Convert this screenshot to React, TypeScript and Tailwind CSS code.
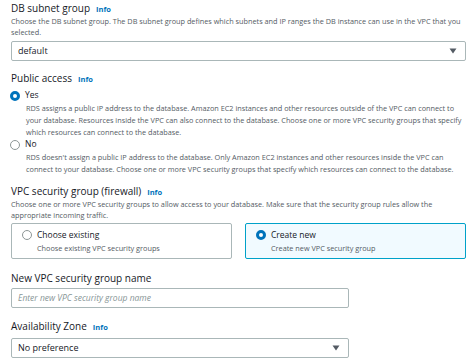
import React from 'react';

const Info = () => (
  <span className="ml-[6px] text-[7.5px] font-bold text-[#0073bb]">Info</span>
);

const Radio = ({ checked }: { checked: boolean }) => (
  <span
    className={`inline-block w-[10px] h-[10px] shrink-0 rounded-full bg-white ${
      checked ? 'border-[3px] border-[#0073bb]' : 'border border-[#8d9696]'
    }`}
  />
);

const Caret = () => (
  <svg width="8" height="6" viewBox="0 0 8 6" className="shrink-0">
    <path d="M0.5 0.5 L7.5 0.5 L4 5.5 Z" fill="#545b64" />
  </svg>
);

const Select = ({ value, wide }: { value: string; wide?: boolean }) => (
  <div
    className={`h-[20px] flex items-center justify-between pl-[6px] pr-[8px] border border-[#aab7b8] rounded-[2px] ${
      wide ? 'w-[455px]' : 'w-[338px]'
    }`}
  >
    <span className="text-[9px] text-[#16191f]">{value}</span>
    <Caret />
  </div>
);

const Label = ({ text, info }: { text: string; info?: boolean }) => (
  <div className="flex items-baseline leading-[14px] text-[10px] text-[#16191f]">
    <span>{text}</span>
    {info && <Info />}
  </div>
);

const Option = ({ label, checked }: { label: string; checked: boolean }) => (
  <div className="flex items-center gap-[5px] h-[13px] -ml-[1px]">
    <Radio checked={checked} />
    <span className="text-[8.5px]">{label}</span>
  </div>
);

export default function App() {
  return (
    <div className="w-[474px] h-[364px] overflow-hidden bg-white px-[11px] pt-[1px] font-['Open_Sans',sans-serif] text-[#16191f]">
      {/* DB subnet group */}
      <Label text="DB subnet group" info />
      <p className="text-[7.3px] leading-[11px] text-[#545b64]">
        Choose the DB subnet group. The DB subnet group defines which subnets and IP ranges the DB instance can use in the VPC that you
        selected.
      </p>
      <div className="mt-[3px]">
        <Select value="default" wide />
      </div>

      {/* Public access */}
      <div className="mt-[10px]">
        <Label text="Public access" info />
      </div>
      <div className="mt-[3px]">
        <Option label="Yes" checked />
      </div>
      <p className="pl-[15px] text-[7.3px] leading-[12px] text-[#545b64]">
        RDS assigns a public IP address to the database. Amazon EC2 instances and other resources outside of the VPC can connect to
        your database. Resources inside the VPC can also connect to the database. Choose one or more VPC security groups that specify
        which resources can connect to the database.
      </p>
      <Option label="No" checked={false} />
      <p className="pl-[15px] text-[7.3px] leading-[12px] text-[#545b64]">
        RDS doesn&apos;t assign a public IP address to the database. Only Amazon EC2 instances and other resources inside the VPC can
        connect to your database. Choose one or more VPC security groups that specify which resources can connect to the database.
      </p>

      {/* VPC security group */}
      <div className="mt-[9px]">
        <Label text="VPC security group (firewall)" info />
      </div>
      <p className="text-[7.3px] leading-[11px] text-[#545b64]">
        Choose one or more VPC security groups to allow access to your database. Make sure that the security group rules allow the
        appropriate incoming traffic.
      </p>
      <div className="mt-[2px] grid grid-cols-2 gap-[13px] w-[455px]">
        <div className="h-[36px] border border-[#aab7b8] rounded-[2px] pl-[11px] flex flex-col justify-center">
          <Option label="Choose existing" checked={false} />
          <span className="pl-[14px] text-[7.3px] leading-[12px] text-[#545b64]">Choose existing VPC security groups</span>
        </div>
        <div className="h-[36px] border border-[#00a1c9] bg-[#f1faff] rounded-[2px] pl-[11px] flex flex-col justify-center">
          <Option label="Create new" checked />
          <span className="pl-[14px] text-[7.3px] leading-[12px] text-[#545b64]">Create new VPC security group</span>
        </div>
      </div>

      {/* New VPC security group name */}
      <div className="mt-[12px]">
        <Label text="New VPC security group name" />
      </div>
      <div className="mt-[3px] w-[338px] h-[20px] border border-[#aab7b8] rounded-[2px] flex items-center pl-[6px]">
        <span className="text-[8.5px] italic text-[#879596]">Enter new VPC security group name</span>
      </div>

      {/* Availability Zone */}
      <div className="mt-[11px]">
        <Label text="Availability Zone" info />
      </div>
      <div className="mt-[4px]">
        <Select value="No preference" />
      </div>
    </div>
  );
}
